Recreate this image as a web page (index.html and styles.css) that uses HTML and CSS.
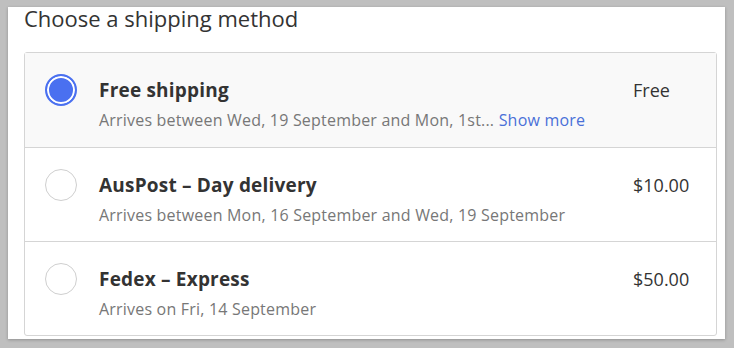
FILE: index.html
```html
<!DOCTYPE html>
<html lang="en">

<head>
    <meta charset="UTF-8">
    <meta name="viewport" content="width=device-width, initial-scale=1.0">
    <title>Shipping</title>
    <link rel="stylesheet" href="styles.css">
</head>

<body>
    <div class="panel">
        <h1>Choose a shipping method</h1>
        <div class="methods">
            <label class="method selected">
                <span class="radio"></span>
                <span class="info">
                    <span class="name">Free shipping</span>
                    <span class="eta">Arrives between Wed, 19 September and Mon, 1st... <a href="#">Show more</a></span>
                </span>
                <span class="price">Free</span>
            </label>
            <label class="method">
                <span class="radio"></span>
                <span class="info">
                    <span class="name">AusPost – Day delivery</span>
                    <span class="eta">Arrives between Mon, 16 September and Wed, 19 September</span>
                </span>
                <span class="price">$10.00</span>
            </label>
            <label class="method">
                <span class="radio"></span>
                <span class="info">
                    <span class="name">Fedex – Express</span>
                    <span class="eta">Arrives on Fri, 14 September</span>
                </span>
                <span class="price">$50.00</span>
            </label>
        </div>
    </div>
</body>

</html>
```

FILE: styles.css
```css
body {
    background-color: #bfbfbf;
    margin: 0;
    padding: 0 9px 8px 8px;
    font-family: "Open Sans", sans-serif;
    color: #333;
}

.panel {
    background: white;
    margin-top: 7px;
    padding: 0 8px 4px 16px;
    box-shadow: 0 1px 3px rgba(0, 0, 0, 0.25);
    height: 332px;
    box-sizing: border-box;
}

h1 {
    font-family: "Open Sans", sans-serif;
    font-weight: 400;
    font-size: 22px;
    color: #333;
    margin: 0;
    line-height: 22px;
    height: 45px;
}

.methods {
    border: 1px solid #d5d5d5;
    border-radius: 3px;
}

.method {
    display: flex;
    align-items: flex-start;
    height: 94px;
    box-sizing: border-box;
    padding: 21px 0 0 20px;
    border-top: 1px solid #d5d5d5;
    cursor: pointer;
}

.method:first-child {
    border-top: none;
    height: 94px;
    background: #f9f9f9;
}

.radio {
    width: 32px;
    height: 32px;
    border: 1px solid #cfcfcf;
    border-radius: 50%;
    background: white;
    flex-shrink: 0;
    box-sizing: border-box;
}

.selected .radio {
    border: 2px solid #4a70f0;
    background: #4a70f0;
    box-shadow: inset 0 0 0 2px white;
}

.info {
    display: flex;
    flex-direction: column;
    margin-left: 22px;
    flex: 1;
}

.name {
    font-weight: 700;
    font-size: 19px;
    letter-spacing: 0.2px;
    line-height: 22px;
    color: #333;
    margin-top: 5px;
}

.eta {
    font-size: 16px;
    letter-spacing: 0.2px;
    color: #777;
    margin-top: 10px;
    line-height: 18px;
}

.eta a {
    color: #4a70d8;
    text-decoration: none;
}

.price {
    width: 83px;
    font-size: 18px;
    line-height: 22px;
    margin-top: 5px;
}
```
